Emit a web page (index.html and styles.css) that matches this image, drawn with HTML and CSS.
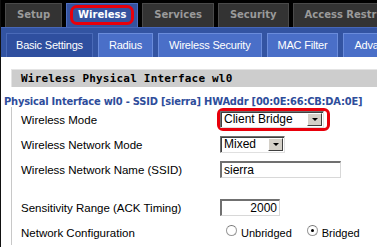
FILE: index.html
```html
<!DOCTYPE html>
<html>
<head>
<meta charset="utf-8">
<link rel="stylesheet" href="styles.css">
</head>
<body>
<div class="page">
  <div class="topbar">
    <div class="tab">Setup</div>
    <div class="tab active"><span class="ring">Wireless</span></div>
    <div class="tab">Services</div>
    <div class="tab">Security</div>
    <div class="tab">Access Restrictions</div>
  </div>
  <div class="subbar">
    <div class="subtab current">Basic Settings</div>
    <div class="subtab">Radius</div>
    <div class="subtab">Wireless Security</div>
    <div class="subtab">MAC Filter</div>
    <div class="subtab">Advanced Settings</div>
  </div>
  <div class="content">
    <div class="header">Wireless Physical Interface wl0</div>
    <div class="iftitle">Physical Interface wl0 - SSID [sierra] HWAddr [00:0E:66:CB:DA:0E]</div>
    <div class="fields">
      <div class="row">
        <div class="label">Wireless Mode</div>
        <div class="ctl"><span class="hl"><span class="select w100"><span class="val">Client Bridge</span><span class="btn"><span class="arrow"></span></span></span></span></div>
      </div>
      <div class="row">
        <div class="label">Wireless Network Mode</div>
        <div class="ctl"><span class="select w65"><span class="val">Mixed</span><span class="btn"><span class="arrow"></span></span></span></div>
      </div>
      <div class="row">
        <div class="label">Wireless Network Name (SSID)</div>
        <div class="ctl"><span class="input w121">sierra</span></div>
      </div>
      <div class="row gap"></div>
      <div class="row">
        <div class="label">Sensitivity Range (ACK Timing)</div>
        <div class="ctl"><span class="input w60 right">2000</span></div>
      </div>
      <div class="row">
        <div class="label">Network Configuration</div>
        <div class="ctl radios">
          <span class="radio"></span><span class="rlabel">Unbridged</span>
          <span class="radio on"></span><span class="rlabel">Bridged</span>
        </div>
      </div>
    </div>
  </div>
</div>
</body>
</html>
```

FILE: styles.css
```css
html, body {
  margin: 0;
  padding: 0;
  background: #fff;
}
.page {
  width: 377px;
  height: 247px;
  overflow: hidden;
  border-left: 1px solid #111;
  box-sizing: border-box;
  font-family: "Liberation Sans", Arial, sans-serif;
  font-size: 11px;
}
.topbar {
  background: #000;
  height: 27px;
  display: flex;
  align-items: flex-end;
  gap: 4px;
  padding-left: 4px;
  white-space: nowrap;
}
.tab {
  flex: none;
  height: 24px;
  box-sizing: border-box;
  border: 1px solid #4a4a4a;
  border-bottom: none;
  background: #333;
  color: #9a9a9a;
  font-family: "DejaVu Sans", Verdana, sans-serif;
  font-weight: bold;
  font-size: 10px;
  line-height: 22px;
  padding: 0 11px;
}
.tab.active {
  background: #35539f;
  border-color: #4f6fc0;
  color: #fff;
  padding: 0 3px;
  line-height: 17px;
  padding-top: 1px;
}
.ring {
  display: inline-block;
  border: 3px solid #e8000b;
  border-radius: 7px;
  padding: 0 5px;
  line-height: 14px;
}
.subbar {
  background: #3354a2;
  border-top: 1px solid #4767b8;
  height: 30px;
  box-sizing: border-box;
  display: flex;
  align-items: flex-end;
  gap: 5px;
  padding-left: 5px;
  white-space: nowrap;
}
.subtab {
  flex: none;
  height: 24px;
  box-sizing: border-box;
  background: #4a6fc8;
  border: 1px solid #6a8cdb;
  border-bottom: none;
  color: #fff;
  font-size: 11px;
  letter-spacing: -0.2px;
  line-height: 23px;
  padding: 0 10px;
}
.subtab.current {
  background: #2f4f9f;
  border-color: #4a6ab8;
  padding: 0 9px;
}
.content {
  background: #fff;
  padding-top: 12px;
}
.header {
  margin-left: 10px;
  height: 18px;
  box-sizing: border-box;
  background: #cdcdcd;
  border-top: 1px solid #e4e4e4;
  border-left: 1px solid #e4e4e4;
  font-family: "DejaVu Sans Mono", monospace;
  font-weight: bold;
  font-size: 11px;
  letter-spacing: 0.2px;
  line-height: 17px;
  padding-left: 9px;
  color: #000;
}
.iftitle {
  margin-top: 9px;
  padding-left: 3px;
  color: #2e4d9b;
  font-family: "DejaVu Sans Condensed", "DejaVu Sans", sans-serif;
  font-stretch: condensed;
  font-weight: bold;
  font-size: 11px;
  line-height: 12px;
  white-space: nowrap;
  letter-spacing: -0.2px;
}
.fields {
  margin-left: 10px;
  border-left: 1px solid #c8c8c8;
  padding-left: 9px;
  padding-top: 0;
  margin-top: -1px;
}
.row {
  display: flex;
  align-items: center;
  height: 25px;
}
.row.gap {
  height: 13px;
}
.label {
  width: 199px;
  flex: none;
  color: #000;
  font-size: 11.5px;
}
.ctl {
  display: flex;
  align-items: center;
}
.hl {
  display: inline-block;
  border: 3px solid #e8000b;
  border-radius: 6px;
  padding: 0 3px 0 0;
  margin-left: -3px;
}
.select {
  display: inline-flex;
  height: 17px;
  box-sizing: border-box;
  border-top: 1px solid #6f6f6f;
  border-left: 1px solid #6f6f6f;
  border-right: 1px solid #e0e0e0;
  border-bottom: 1px solid #e0e0e0;
  box-shadow: inset 1px 1px 0 #404040;
  background: #fff;
  align-items: center;
  font-size: 12px;
}
.val {
  flex: 1;
  padding-left: 3px;
  line-height: 15px;
}
.btn {
  width: 15px;
  height: 13px;
  margin-right: 1px;
  box-sizing: border-box;
  background: #d4d0c8;
  border-top: 1px solid #fff;
  border-left: 1px solid #fff;
  border-right: 1px solid #404040;
  border-bottom: 1px solid #404040;
  display: flex;
  align-items: center;
  justify-content: center;
}
.arrow {
  width: 0;
  height: 0;
  border-left: 3px solid transparent;
  border-right: 3px solid transparent;
  border-top: 3px solid #000;
}
.w100 { width: 104px; }
.w65 { width: 65px; }
.input {
  display: inline-block;
  height: 17px;
  box-sizing: border-box;
  border-top: 2px solid #707070;
  border-left: 2px solid #707070;
  border-right: 1px solid #d8d8d8;
  border-bottom: 1px solid #d8d8d8;
  background: #fff;
  font-size: 12px;
  line-height: 14px;
  padding: 0 2px;
}
.w121 { width: 121px; }
.w60 { width: 60px; }
.right { text-align: right; }
.radios {
  padding-left: 6px;
  gap: 0;
}
.radio {
  display: inline-block;
  width: 11px;
  height: 11px;
  box-sizing: border-box;
  border-radius: 50%;
  border: 1px solid #999;
  border-top-color: #777;
  background: #fff;
  position: relative;
  margin-right: 4px;
  margin-top: -4px;
}
.radio.on::after {
  content: "";
  position: absolute;
  left: 3px;
  top: 3px;
  width: 3px;
  height: 3px;
  border-radius: 50%;
  background: #000;
}
.rlabel {
  font-size: 11px;
  margin-right: 15px;
}
```
